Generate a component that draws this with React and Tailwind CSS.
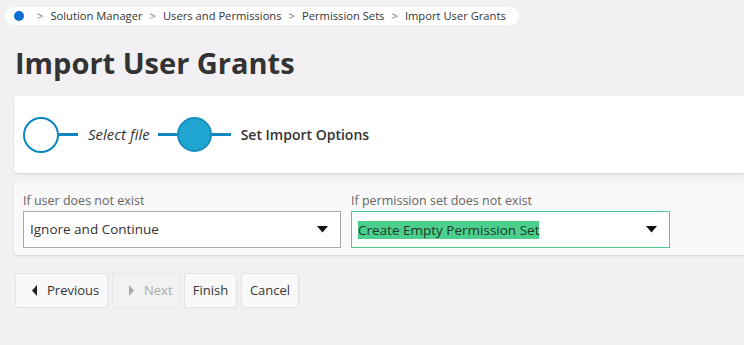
import React from "react";

function Caret() {
  return (
    <svg width="11" height="7" viewBox="0 0 11 7" className="shrink-0">
      <path d="M0 0 H11 L5.5 6.5 Z" fill="#111" />
    </svg>
  );
}

function Chevron() {
  return <span className="mx-[7px] text-[#777]">&gt;</span>;
}

export default function App() {
  const crumbs = ["Solution Manager", "Users and Permissions", "Permission Sets", "Import User Grants"];

  return (
    <div
      className="w-[744px] h-[345px] overflow-hidden bg-[#f2f0f3] text-[#333]"
      style={{ fontFamily: '"Open Sans", "Noto Sans", sans-serif' }}
    >
      {/* breadcrumb */}
      <div className="flex pt-[7px] pl-[5px]">
        <div className="flex items-center h-[18px] bg-white rounded-full pl-[9px] pr-[13px] text-[11.2px] leading-none">
          <span className="w-[10px] h-[10px] rounded-full bg-[#0a6fd6]" />
          <span className="ml-[6px]" />
          {crumbs.map((c) => (
            <React.Fragment key={c}>
              <Chevron />
              <span>{c}</span>
            </React.Fragment>
          ))}
        </div>
      </div>

      <h1 className="ml-[15px] mt-[20px] text-[29px] leading-[36px] font-bold text-[#333]">
        Import User Grants
      </h1>

      {/* stepper card */}
      <div className="ml-[14px] mt-[15px] h-[77px] bg-white rounded-l-[4px] shadow-[0_1px_2px_rgba(0,0,0,0.15)] flex items-center pl-[9px]">
        <div className="w-[36px] h-[36px] rounded-full border-2 border-[#0e86c0] bg-white" />
        <div className="w-[19px] h-[3px] bg-[#0e86c0]" />
        <span className="ml-[10px] text-[15px] italic text-[#333]">Select file</span>
        <div className="ml-[8px] w-[19px] h-[3px] bg-[#0e86c0]" />
        <div className="w-[35px] h-[35px] rounded-full border-2 border-[#1a8cc0] bg-[#1fa5d0]" />
        <div className="w-[19px] h-[3px] bg-[#0e86c0]" />
        <span className="ml-[10px] text-[14px] font-semibold text-[#333]">Set Import Options</span>
      </div>

      {/* options card */}
      <div className="ml-[14px] mt-[10px] h-[72px] bg-[#f9f9f9] rounded-l-[4px] shadow-[0_1px_2px_rgba(0,0,0,0.12)] flex gap-[10px] pl-[9px] pt-[9px]">
        <div className="flex flex-col">
          <label className="text-[12.5px] leading-[18px] text-[#666]">If user does not exist</label>
          <div className="mt-[1px] w-[318px] h-[37px] bg-white border border-[#aaa] flex items-center justify-between pl-[6px] pr-[12px]">
            <span className="text-[13.5px] text-[#333]">Ignore and Continue</span>
            <Caret />
          </div>
        </div>
        <div className="flex flex-col">
          <label className="text-[12.5px] leading-[18px] text-[#666]">If permission set does not exist</label>
          <div className="mt-[1px] w-[319px] h-[37px] bg-white border border-[#4ccf8c] flex items-center justify-between pl-[6px] pr-[12px]">
            <span className="text-[13.5px] text-[#1f3a2b] bg-[#4ccf8c] leading-[18px]">Create Empty Permission Set</span>
            <Caret />
          </div>
        </div>
      </div>

      {/* buttons */}
      <div className="ml-[15px] mt-[18px] flex gap-[4px] text-[13px]">
        <button className="h-[35px] w-[93px] flex items-center gap-[10px] pl-[16px] bg-[#f9f9f9] border border-[#e2e2e2] rounded-[3px] text-[#333]">
          <svg width="5" height="11" viewBox="0 0 5 11">
            <path d="M5 0 V11 L0 5.5 Z" fill="#222" />
          </svg>
          Previous
        </button>
        <button className="h-[35px] w-[68px] flex items-center gap-[10px] pl-[16px] bg-[#f2f2f2] border border-[#e6e6e6] rounded-[3px] text-[#aaa]">
          <svg width="5" height="11" viewBox="0 0 5 11">
            <path d="M0 0 V11 L5 5.5 Z" fill="#aaa" />
          </svg>
          Next
        </button>
        <button className="h-[35px] w-[53px] flex items-center justify-center bg-[#f9f9f9] border border-[#e2e2e2] rounded-[3px] text-[#333]">
          Finish
        </button>
        <button className="h-[35px] w-[58px] flex items-center justify-center bg-[#f9f9f9] border border-[#e2e2e2] rounded-[3px] text-[#333]">
          Cancel
        </button>
      </div>
    </div>
  );
}
